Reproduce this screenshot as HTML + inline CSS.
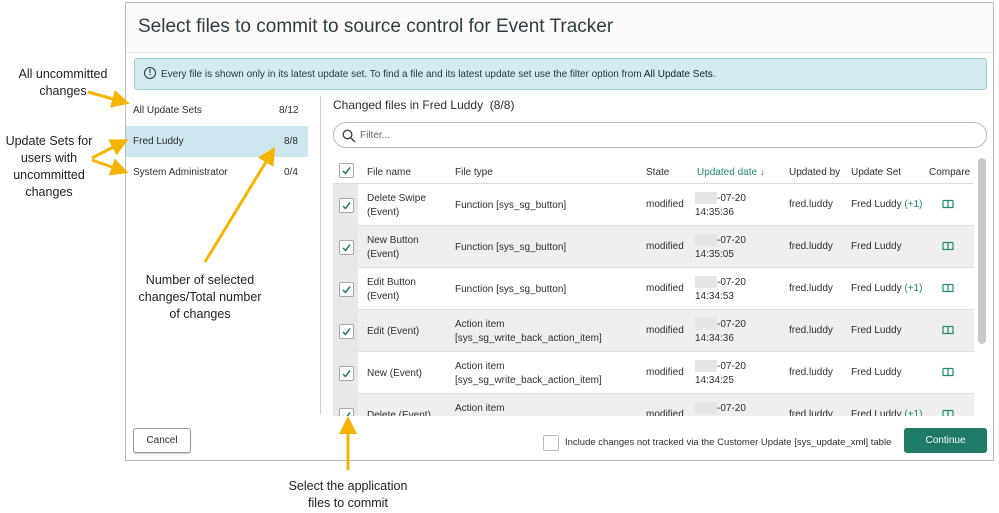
<html><head><style>
*{box-sizing:border-box;margin:0;padding:0}
body{width:999px;height:513px;background:#fff;font-family:"Liberation Sans",sans-serif;position:relative;overflow:hidden;color:#2e2e2e}
.a{position:absolute}
.dlg{left:125px;top:2px;width:869px;height:459px;border:1px solid #bbb;background:#fff}
.hd{left:0;top:0;width:867px;height:50px;background:#fafafa;border-bottom:1px solid #e6e6e6}
.t{font-size:19px;color:#2e3d40;left:12px;top:13px}
.ban{left:8px;top:55px;width:853px;height:32px;background:#d3ebee;border:1px solid #9ccfd5;border-radius:3px;font-size:10px;color:#1f3b40;padding:10px 0 0 26px}
.s{font-size:10px}
.ann{font-size:12.5px;color:#222;text-align:center;line-height:17px}
.cb{width:15px;height:15px;border:1px solid #aaa;background:#fff;border-radius:2px}
.row{left:0;width:641px;height:42px;border-bottom:1px solid #ddd;font-size:10px}
.row div{position:absolute}
</style></head><body>
<div class="a dlg">
<div class="a hd"><div class="a t">Select files to commit to source control for Event Tracker</div></div>
<div class="a ban"><span style="position:absolute;left:9px;top:8px;width:12px;height:12px;border:1.3px solid #1f3b40;border-radius:50%;font-size:8px;text-align:center;line-height:10px;font-weight:bold">!</span>Every file is shown only in its latest update set. To find a file and its latest update set use the filter option from <b style="font-weight:normal;color:#123">All Update Sets</b>.</div>
<div class="a s" style="left:7px;top:102px">All Update Sets</div><div class="a s" style="left:153px;top:102px">8/12</div>
<div class="a" style="left:0;top:123px;width:182px;height:31px;background:#cde7ee"></div>
<div class="a s" style="left:7px;top:133px">Fred Luddy</div><div class="a s" style="left:158px;top:133px">8/8</div>
<div class="a s" style="left:7px;top:164px">System Administrator</div><div class="a s" style="left:158px;top:164px">0/4</div>
<div class="a" style="left:194px;top:93px;width:1px;height:318px;background:#ccc"></div>
<div class="a" style="left:207px;top:95px;font-size:12px">Changed files in Fred Luddy&nbsp; (8/8)</div>
<div class="a" style="left:207px;top:119px;width:654px;height:26px;border:1px solid #bbb;border-radius:13px;font-size:10px;color:#666;padding:7px 0 0 26px">Filter...
<svg class="a" style="left:8px;top:6px" width="14" height="14"><circle cx="5.5" cy="5.5" r="4.3" fill="none" stroke="#444" stroke-width="1.4"/><path d="M8.6 8.6L13 13" stroke="#444" stroke-width="1.5"/></svg></div>
<div class="a" style="left:207px;top:153px;width:641px;height:260px;overflow:hidden">
<div class="a row" style="top:0;height:28px;font-size:10px">
<div class="cb" style="left:6px;top:7px"><svg width="13" height="13" style="position:absolute;left:0;top:0"><path d="M3 7L5.5 9.5L10 3.5" fill="none" stroke="#1f7a67" stroke-width="1.5"/></svg></div>
<div style="left:34px;top:11px">File name</div><div style="left:122px;top:11px">File type</div><div style="left:313px;top:11px">State</div><div style="left:364px;top:11px;color:#1f8a70">Updated date ↓</div><div style="left:456px;top:11px">Updated by</div><div style="left:518px;top:11px">Update Set</div><div style="left:596px;top:11px">Compare</div></div>
<div id="rows"></div>
</div>
<div class="a" style="left:852px;top:155px;width:8px;height:186px;background:#c8c8c8;border-radius:4px"></div>
<div class="a" style="left:7px;top:425px;width:58px;height:25px;border:1px solid #999;border-radius:3px;font-size:10px;text-align:center;line-height:23px;box-shadow:0 1px 1px #ccc">Cancel</div>
<div class="a cb" style="left:417px;top:432px;width:16px;height:16px;border-color:#bbb"></div>
<div class="a" style="left:439px;top:434px;font-size:9.5px">Include changes not tracked via the Customer Update [sys_update_xml] table</div>
<div class="a" style="left:778px;top:425px;width:83px;height:25px;background:#1f7a67;color:#fff;border-radius:3px;font-size:10px;text-align:center;line-height:25px">Continue</div>
</div>
<svg class="a" style="left:0;top:0" width="999" height="513">
<defs><marker id="m" markerWidth="6" markerHeight="6" refX="4" refY="3" orient="auto"><path d="M0 0L6 3L0 6z" fill="#f5b400"/></marker></defs>
<g stroke="#f5b400" stroke-width="3" fill="none" marker-end="url(#m)">
<path d="M88 92L124 102"/><path d="M92 158L123 142"/><path d="M92 160L123 171"/><path d="M205 262L272 152"/><path d="M348 470L348 422"/></g></svg>
<div class="a ann" style="left:8px;top:66px;width:110px">All uncommitted changes</div>
<div class="a ann" style="left:0;top:133px;width:98px">Update Sets for users with uncommitted changes</div>
<div class="a ann" style="left:135px;top:272px;width:130px">Number of selected changes/Total number of changes</div>
<div class="a ann" style="left:280px;top:478px;width:136px">Select the application files to commit</div>
<script>
var d=[["Delete Swipe<br>(Event)","Function [sys_sg_button]","14:35:36",1],["New Button<br>(Event)","Function [sys_sg_button]","14:35:05",0],["Edit Button<br>(Event)","Function [sys_sg_button]","14:34:53",1],["Edit (Event)","Action item<br>[sys_sg_write_back_action_item]","14:34:36",0],["New (Event)","Action item<br>[sys_sg_write_back_action_item]","14:34:25",0],["Delete (Event)","Action item<br>[sys_sg_write_back_action_item]","14:34:10",1]];
var ck='<svg width="13" height="13" style="position:absolute;left:0;top:0"><path d="M3 7L5.5 9.5L10 3.5" fill="none" stroke="#1f7a67" stroke-width="1.5"/></svg>';
var bk='<svg width="12" height="10"><path d="M1 1.5h4.2q.8 0 .8 .8v6.7M11 1.5H6.8q-.8 0-.8 .8M1 1.5v7h10v-7" fill="none" stroke="#1f8a70" stroke-width="1.2"/></svg>';
var h="";d.forEach(function(r,i){var t=28+i*42,bg=i%2?"#efefef":"#fff";var one=r[0].indexOf("<br>")<0;
h+='<div class="a row" style="top:'+t+'px;background:'+bg+'"><div style="left:0;top:0;width:25px;height:42px;background:#e8e8e8"></div><div class="cb" style="left:6px;top:14px">'+ck+'</div><div style="left:34px;top:'+(one?15:8)+'px;line-height:14px">'+r[0]+'</div><div style="left:122px;top:'+(r[1].indexOf("<br>")<0?15:8)+'px;line-height:14px">'+r[1]+'</div><div style="left:313px;top:15px">modified</div><div style="left:362px;top:8px;line-height:14px"><span style="display:inline-block;width:22px;height:12px;background:#e6e6e6;vertical-align:middle"></span>-07-20<br>'+r[2]+'</div><div style="left:456px;top:15px">fred.luddy</div><div style="left:518px;top:15px">Fred Luddy '+(r[3]?'<span style="color:#1f8a70">(+1)</span>':'')+'</div><div style="left:609px;top:15px">'+bk+'</div></div>';});
document.getElementById("rows").innerHTML=h;
</script>
</body></html>
